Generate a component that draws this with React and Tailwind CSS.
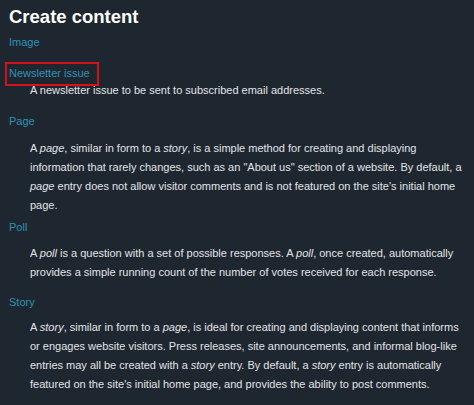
export default function App() {
  const link = 'text-[#2f93b4] leading-[19px]'
  const desc = 'ml-[21px] w-[432px] leading-[19px] text-[#e2e4e6]'

  return (
    <div className="h-[405px] w-[474px] overflow-hidden bg-[#1e2630] pl-[9px] text-[11px] font-['Liberation_Sans',Arial,sans-serif]">
      <h1 className="pt-[5px] text-[18.5px] font-bold leading-[24px] text-white">Create content</h1>

      <dl className="relative">
        <dt className={`mt-[4px] ${link}`}>Image</dt>

        <dt className={`relative mt-[12px] ${link}`}>
          <span>Newsletter issue</span>
          <span className="pointer-events-none absolute -left-[4px] -top-[2px] h-[24px] w-[94px] border-2 border-[#d3121d]" />
        </dt>
        <dd className={`-mt-[2px] ${desc}`}>A newsletter issue to be sent to subscribed email addresses.</dd>

        <dt className={`mt-[12px] ${link}`}>Page</dt>
        <dd className={`mt-[8px] ${desc}`}>
          A <em>page</em>, similar in form to a <em>story</em>, is a simple method for creating and displaying
          information that rarely changes, such as an "About us" section of a website. By default, a{' '}
          <em>page</em> entry does not allow visitor comments and is not featured on the site's initial home
          page.
        </dd>

        <dt className={`mt-[3px] ${link}`}>Poll</dt>
        <dd className={`mt-[7px] ${desc}`}>
          A <em>poll</em> is a question with a set of possible responses. A <em>poll</em>, once created,
          automatically provides a simple running count of the number of votes received for each response.
        </dd>

        <dt className={`mt-[11px] ${link}`}>Story</dt>
        <dd className={`mt-[6px] ${desc}`}>
          A <em>story</em>, similar in form to a <em>page</em>, is ideal for creating and displaying content
          that informs or engages website visitors. Press releases, site announcements, and informal blog-like
          entries may all be created with a <em>story</em> entry. By default, a <em>story</em> entry is
          automatically featured on the site's initial home page, and provides the ability to post comments.
        </dd>
      </dl>
    </div>
  )
}
